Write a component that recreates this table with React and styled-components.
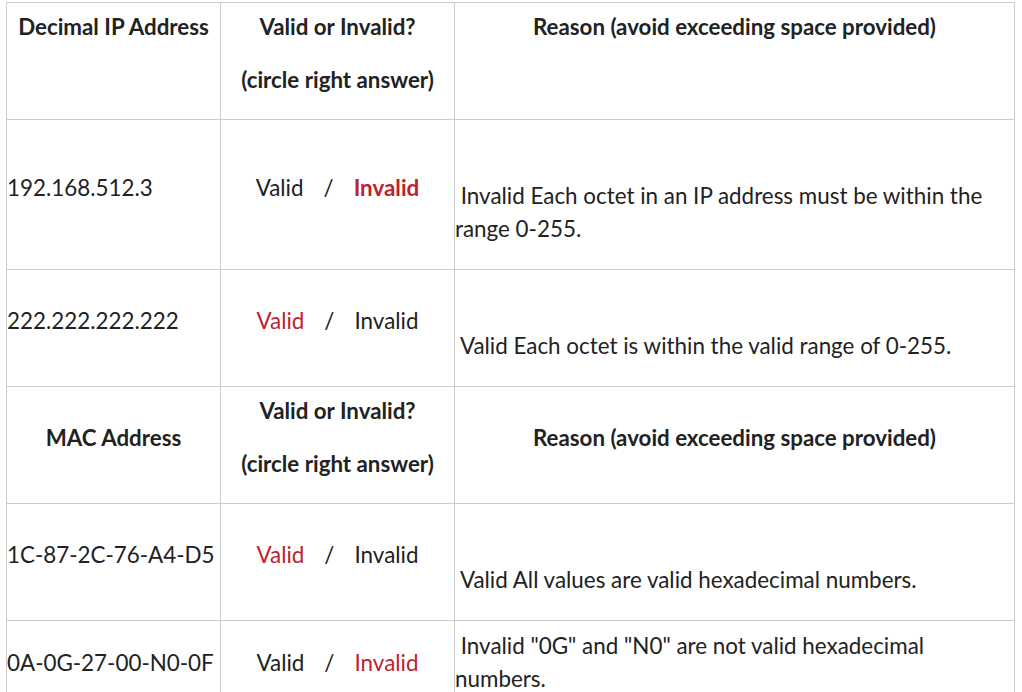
import React from 'react';
import styled, { createGlobalStyle } from 'styled-components';

const GlobalStyle = createGlobalStyle`
    body {
        margin: 0;
        background: #fff;
        font-family: Lato, "Open Sans", sans-serif;
        color: #222;
    }
`;

const Page = styled.div`
    padding: 2px 0 0 6px;
`;

const Table = styled.table`
    width: 1009px;
    border-collapse: collapse;
    table-layout: fixed;
    font-size: 22.4px;
`;

const HeadCell = styled.th`
    border: 1px solid #ccc;
    padding: ${p => (p.$top ? '4px 0 6px' : '4px 0 6px')};
    vertical-align: ${p => (p.$top ? 'top' : 'middle')};
    text-align: center;
    font-weight: 700;
    font-size: 22.3px;
`;

const HeadLine = styled.p`
    margin: 0 0 13px;
    line-height: 40px;
`;

const Cell = styled.td`
    border: 1px solid #ccc;
    padding: 8px 0;
    vertical-align: middle;
    text-align: ${p => (p.$center ? 'center' : 'left')};
`;

const Line = styled.p`
    margin: 0 0 ${p => (p.$drop ? '16px' : '15px')};
    padding-top: ${p => (p.$drop ? '51px' : '0')};
    line-height: 33px;
`;

const Choice = styled.span`
    color: ${p => (p.$picked ? '#c0212f' : '#222')};
    font-weight: ${p => (p.$bold ? 700 : 400)};
`;

const Slash = styled.span`
    padding: 0 20px;
`;

const rows = [
    {
        kind: 'head',
        first: 'Decimal IP Address',
        top: true,
    },
    {
        addr: '192.168.512.3',
        answer: 'invalid',
        bold: true,
        reason: '\u00a0Invalid Each octet in an IP address must be within the range 0-255.',
        drop: true,
    },
    {
        addr: '222.222.222.222',
        answer: 'valid',
        reason: '\u00a0Valid Each octet is within the valid range of 0-255.',
        drop: true,
    },
    {
        kind: 'head',
        first: 'MAC Address',
    },
    {
        addr: '1C-87-2C-76-A4-D5',
        answer: 'valid',
        reason: '\u00a0Valid All values are valid hexadecimal numbers.',
        drop: true,
    },
    {
        addr: '0A-0G-27-00-N0-0F',
        answer: 'invalid',
        reason: '\u00a0Invalid "0G" and "N0" are not valid hexadecimal numbers.',
    },
];

function HeadRow({ first, top }) {
    return (
        <tr>
            <HeadCell $top={top}>
                <HeadLine>{first}</HeadLine>
            </HeadCell>
            <HeadCell $top={top}>
                <HeadLine>Valid or Invalid?</HeadLine>
                <HeadLine>(circle right answer)</HeadLine>
            </HeadCell>
            <HeadCell $top={top}>
                <HeadLine>Reason (avoid exceeding space provided)</HeadLine>
            </HeadCell>
        </tr>
    );
}

function AnswerRow({ addr, answer, bold, reason, drop }) {
    return (
        <tr>
            <Cell>
                <Line>{addr}</Line>
            </Cell>
            <Cell $center>
                <Line>
                    <Choice $picked={answer === 'valid'}>Valid</Choice>
                    <Slash>/</Slash>
                    <Choice $picked={answer === 'invalid'} $bold={bold}>Invalid</Choice>
                </Line>
            </Cell>
            <Cell>
                <Line $drop={drop}>{reason}</Line>
            </Cell>
        </tr>
    );
}

export default function App() {
    return (
        <Page>
            <GlobalStyle />
            <Table>
                <colgroup>
                    <col style={{ width: 214 }} />
                    <col style={{ width: 234 }} />
                    <col />
                </colgroup>
                <tbody>
                    {rows.map((r, i) =>
                        r.kind === 'head'
                            ? <HeadRow key={i} {...r} />
                            : <AnswerRow key={i} {...r} />
                    )}
                </tbody>
            </Table>
        </Page>
    );
}
